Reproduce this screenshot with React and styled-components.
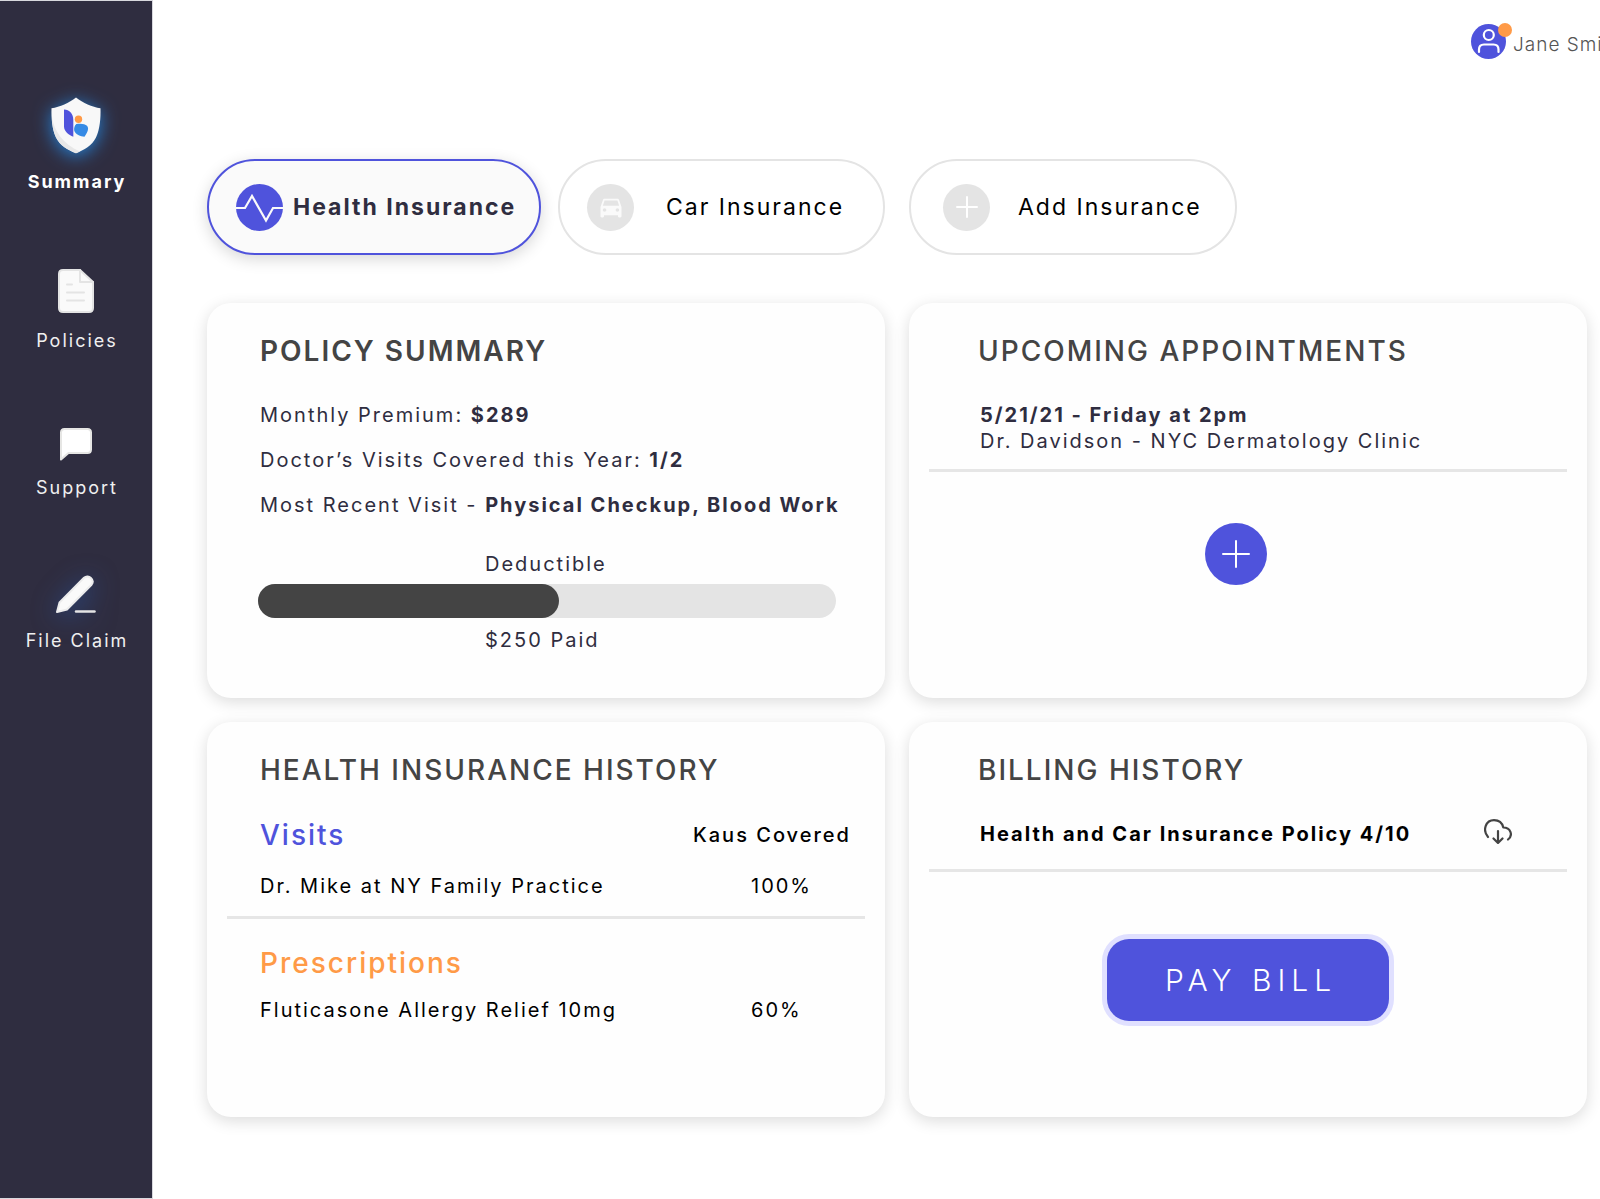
import styled, { createGlobalStyle } from 'styled-components';
import { MdDirectionsCar } from 'react-icons/md';

// global page styles
const GlobalStyle = createGlobalStyle`
    * {
        box-sizing: border-box;
    }
    body {
        margin: 0;
        background-color: #fff;
        color: #2f2d40;
        font-family: Inter, "Liberation Sans", sans-serif;
        font-size: 20px;
        line-height: 26px;
        letter-spacing: 2px;
    }
    h1, h2, p {
        margin: 0;
    }
    button {
        font-family: inherit;
        letter-spacing: inherit;
        cursor: pointer;
    }
`

const Page = styled.div`
    display: flex;
    min-height: 100vh;
`

// sidebar
const Sidebar = styled.nav`
    display: flex;
    flex-direction: column;
    align-items: center;
    gap: 76px;
    flex: 0 0 153px;
    padding-top: 96px;
    background-color: #2f2d40;
    border: 1px solid #d8d8de;
    border-left: none;
`
const SideLink = styled.a`
    display: flex;
    flex-direction: column;
    align-items: center;
    gap: 17px;
    color: ${({ $active }) => ($active ? '#fff' : '#f0f0f0')};
    font-size: 18px;
    font-weight: ${({ $active }) => ($active ? 700 : 400)};
    line-height: 22px;
    text-decoration: none;

    svg {
        display: block;
        overflow: visible;
        filter: ${({ $glow }) => $glow || 'none'};
    }
`
// the trailing letter space would push the label off centre
const SideLabel = styled.span`
    padding-left: 2px;
`

// main area
const Main = styled.main`
    flex: 1;
    min-width: 0;
    padding: 24px 0 80px 54px;
`
const Header = styled.header`
    display: flex;
    justify-content: flex-end;
    overflow: hidden;
    margin-top: -10px;
    padding-top: 10px;
`
const User = styled.a`
    display: flex;
    align-items: center;
    gap: 7px;
    width: 129px;
    color: #555;
    font-size: 19px;
    font-weight: 300;
    letter-spacing: 1px;
    white-space: nowrap;
    text-decoration: none;
`
const Avatar = styled.span`
    position: relative;
    flex: none;
    height: 35px;

    &::after {
        content: '';
        position: absolute;
        top: -1px;
        right: -6px;
        width: 14px;
        height: 14px;
        border-radius: 50%;
        background-color: #ff9a47;
    }
`
const UserName = styled.span`
    padding-top: 6px;
`
const Content = styled.div`
    padding-right: 13px;
`
const Columns = styled.div`
    display: grid;
    grid-template-columns: 1fr 1fr;
    gap: 24px;
`
const Tabs = styled(Columns)`
    margin: 100px 0 48px;
`
const TabPair = styled.div`
    display: flex;
    gap: 17px;
`
const Tab = styled.button`
    display: flex;
    align-items: center;
    gap: ${({ $gap }) => $gap}px;
    flex: ${({ $active }) => ($active ? '0 0 334px' : '0 1 328px')};
    height: 96px;
    padding: 0 0 0 ${({ $inset }) => $inset}px;
    border: 2px solid ${({ $active }) => ($active ? '#4f53dc' : '#e4e4e4')};
    border-radius: 48px;
    background-color: ${({ $active }) => ($active ? '#fafafa' : '#fff')};
    box-shadow: ${({ $active }) => ($active ? '0 4px 16px rgba(0, 0, 0, 0.16)' : 'none')};
    color: ${({ $active }) => ($active ? '#2f2d40' : '#000')};
    font-size: 23px;
    font-weight: ${({ $active }) => ($active ? 700 : 400)};
    white-space: nowrap;
`
const TabIcon = styled.span`
    display: flex;
    align-items: center;
    justify-content: center;
    flex: none;
    width: 47px;
    height: 47px;
    border-radius: 50%;
    background-color: ${({ $active }) => ($active ? '#4f53dc' : '#e4e4e4')};
    color: #fafafa;
`

// cards
const Card = styled.section`
    min-height: 395px;
    padding: 32px 20px;
    border-radius: 24px;
    background-color: #fefefe;
    box-shadow: 0 4px 16px rgba(0, 0, 0, 0.14);
`
const CardTitle = styled.h2`
    padding-left: ${({ $wide }) => ($wide ? 49 : 33)}px;
    color: #444;
    font-size: 28px;
    font-weight: ${({ $strong }) => ($strong ? 600 : 500)};
    line-height: 32px;
`
const Facts = styled.div`
    display: flex;
    flex-direction: column;
    gap: 19px;
    margin-top: 35px;
    padding-left: 33px;
    white-space: nowrap;
`
const Deductible = styled.div`
    margin: 33px 29px 0 31px;
`
const DeductibleLabel = styled.p`
    width: 124px;
    margin: 0 auto;
    white-space: nowrap;
`
const Track = styled.div`
    height: 34px;
    margin: 7px 0 9px;
    border-radius: 17px;
    background-color: #e4e4e4;
`
const Fill = styled.div`
    height: 100%;
    border-radius: 17px;
    background-color: #444;
`
const Entry = styled.div`
    display: flex;
    align-items: center;
    justify-content: space-between;
    margin-top: 35px;
    padding: 0 55px ${({ $bottom }) => $bottom}px 51px;
    border-bottom: 3px solid #e6e6e6;
    color: ${({ $dark }) => ($dark ? '#000' : 'inherit')};
`
const AddButton = styled.button`
    display: flex;
    align-items: center;
    justify-content: center;
    width: 62px;
    height: 62px;
    margin: 51px auto 0;
    padding: 0;
    border: none;
    border-radius: 50%;
    background-color: #4f53dc;
`
const AddArea = styled.div`
    padding-right: 24px;
`
const IconButton = styled.button`
    display: flex;
    height: 26px;
    margin-top: -4px;
    padding: 0;
    border: none;
    background: none;
    color: #444;
`
const PayButton = styled.button`
    display: block;
    width: 282px;
    height: 82px;
    margin: 67px auto 0;
    padding: 0 0 0 6px;
    border: none;
    border-radius: 22px;
    background-color: #4f53dc;
    box-shadow: 0 0 0 5px #e0e0ff;
    color: #fff;
    font-size: 30px;
    font-weight: 300;
    letter-spacing: 6px;
`

// history table
const HistoryTable = styled.table`
    width: 100%;
    margin-top: 32px;
    border-collapse: collapse;
    color: #000;

    th, td {
        padding: 0;
        text-align: left;
        font-weight: 400;
        white-space: nowrap;
    }
    th:first-child, td:first-child {
        padding-left: 33px;
    }
    th:nth-child(2) {
        width: 172px;
        font-weight: 500;
    }
    td {
        height: 60px;
    }
    td:nth-child(2) {
        padding-left: 58px;
    }
    tbody:first-of-type td {
        height: 65px;
        padding-top: 4px;
        border-bottom: 3px solid #e6e6e6;
    }
    tbody:nth-of-type(2) th {
        padding-top: 27px;
    }
`
const GroupName = styled.span`
    color: ${({ $color }) => $color};
    font-size: 28px;
    font-weight: 500;
    line-height: 34px;
`

function ShieldIcon() {
    return (
        <svg width="50" height="57" viewBox="0 0 50 57">
            <path d="M25 0.500C18 6 9 10 0.500 11.300C0.200 21 1 32 5 40.500C9 48.500 17 53 25 56.300C33 53 41 48.500 45 40.500C49 32 49.800 21 49.500 11.300C41 10 32 6 25 0.500Z" fill="#f8f8f8" />
            <path d="M1 20C3 34 12 47 29 54.500L25 56.300C17 53 9 48.500 5 40.500C2 34 1 27 1 20Z" fill="#e8e8e8" />
            <path d="M13 12.500C18.500 12.500 22.300 17 22.300 23V39.800C17.500 38 13 34 13 29.500Z" fill="#4f53dc" />
            <circle cx="27.500" cy="22.200" r="3.700" fill="#ff9a47" />
            <path d="M25.300 27C30 26.300 34 26.800 36 28.800C38 31 37.200 34.500 33.500 39.800C29.500 39.500 24.500 37.500 23.200 33.500C22.800 31 23.600 28.500 25.300 27Z" fill="#358ae5" />
        </svg>
    )
}

function DocumentIcon() {
    return (
        <svg width="36" height="44" viewBox="0 0 36 44" fill="none" stroke="#e4e4e4" strokeWidth="2" strokeLinecap="round" strokeLinejoin="round">
            <path d="M5 1H22L35 13V39Q35 43 31 43H5Q1 43 1 39V5Q1 1 5 1Z" fill="#fafafa" />
            <path d="M22 1V13H35" />
            <path d="M9 15.500H14M9 23.500H26M9 31.500H26" />
        </svg>
    )
}

function ChatIcon() {
    return (
        <svg width="32" height="32" viewBox="0 0 32 32">
            <path d="M4.500 1H27.500Q31 1 31 4.500V21.500Q31 25 27.500 25H8.500L1 31.500V4.500Q1 1 4.500 1Z" fill="#fff" stroke="#e6e6e4" strokeWidth="2" strokeLinejoin="round" />
        </svg>
    )
}

function PenIcon() {
    return (
        <svg width="40" height="38" viewBox="0 0 40 38" strokeLinejoin="round" strokeLinecap="round">
            <path d="M1 37L3.500 27.500L28 2.800C32.500 -1.200 39.500 5 35.300 10L11 34.500Z" fill="#fafafa" stroke="#ececec" strokeWidth="2" />
            <path d="M20 36.500H38.500" stroke="#e4e4e4" strokeWidth="2.500" />
        </svg>
    )
}

function UserIcon() {
    return (
        <svg width="35" height="35" viewBox="0 0 35 35" fill="none" stroke="#fff" strokeWidth="2.200" strokeLinecap="round">
            <circle cx="17.500" cy="17.500" r="17.500" fill="#4f53dc" stroke="none" />
            <circle cx="17.800" cy="11" r="5" />
            <path d="M8 28V25.500Q8 20.500 13 20.500H22.500Q27.500 20.500 27.500 25.500V28" />
        </svg>
    )
}

function PulseIcon() {
    return (
        <svg width="47" height="47" viewBox="0 0 47 47" fill="none" stroke="#fafafa" strokeWidth="2.200">
            <path d="M0 24H9L16 12L30 36.500L37 24H47" />
        </svg>
    )
}

function PlusIcon({ size, width = 2 }) {
    return (
        <svg width={size} height={size} viewBox={`0 0 ${size} ${size}`} stroke="#fff" strokeWidth={width} strokeLinecap="round">
            <path d={`M${size / 2} 1V${size - 1}M1 ${size / 2}H${size - 1}`} />
        </svg>
    )
}

function DownloadIcon() {
    return (
        <svg width="28" height="25" viewBox="0 0 28 25" fill="none" stroke="currentColor" strokeWidth="2.200" strokeLinecap="round" strokeLinejoin="round">
            <path d="M4 18C-2 11 2 1.200 10 1.200C15 1.200 18.300 4.500 19.300 8.500C26.500 8.500 29.500 16 24 20.500" />
            <path d="M14 12V23.500M9.500 19.500L14 24L18.500 19.500" />
        </svg>
    )
}

const links = [
    { name: 'Summary', icon: <ShieldIcon />, active: true, glow: 'drop-shadow(0 3px 9px #2683d8)' },
    { name: 'Policies', icon: <DocumentIcon /> },
    { name: 'Support', icon: <ChatIcon /> },
    { name: 'File Claim', icon: <PenIcon />, glow: 'drop-shadow(0 4px 12px rgba(38, 100, 200, 0.5))' },
]

// percentage of the deductible already paid
const paidShare = 52;

export default function App() {
    return (
        <Page>
            <GlobalStyle />
            <Sidebar>
                {
                    links.map((link) => (
                        <SideLink key={link.name} href="#" $active={link.active} $glow={link.glow}>
                            {link.icon}
                            <SideLabel>{link.name}</SideLabel>
                        </SideLink>
                    ))
                }
            </Sidebar>
            <Main>
                <Header>
                    <User href="#">
                        <Avatar><UserIcon /></Avatar>
                        <UserName>Jane Smith</UserName>
                    </User>
                </Header>
                <Content>
                    <Tabs>
                        <TabPair>
                            <Tab $active $inset={27} $gap={10}>
                                <TabIcon $active><PulseIcon /></TabIcon>
                                Health Insurance
                            </Tab>
                            <Tab $inset={27} $gap={32}>
                                <TabIcon><MdDirectionsCar size={28} /></TabIcon>
                                Car Insurance
                            </Tab>
                        </TabPair>
                        <TabPair>
                            <Tab $inset={32} $gap={28}>
                                <TabIcon><PlusIcon size={22} /></TabIcon>
                                Add Insurance
                            </Tab>
                        </TabPair>
                    </Tabs>
                    <Columns>
                        <Card>
                            <CardTitle $strong>POLICY SUMMARY</CardTitle>
                            <Facts>
                                <p>Monthly Premium: <b>$289</b></p>
                                <p>Doctor’s Visits Covered this Year: <b>1/2</b></p>
                                <p>Most Recent Visit - <b>Physical Checkup, Blood Work</b></p>
                            </Facts>
                            <Deductible>
                                <DeductibleLabel id="deductible">Deductible</DeductibleLabel>
                                <Track role="progressbar" aria-labelledby="deductible" aria-valuenow={paidShare}>
                                    <Fill style={{ width: `${paidShare}%` }} />
                                </Track>
                                <DeductibleLabel>$250 Paid</DeductibleLabel>
                            </Deductible>
                        </Card>
                        <Card>
                            <CardTitle $wide>UPCOMING APPOINTMENTS</CardTitle>
                            <Entry $bottom={15}>
                                <div>
                                    <p><b>5/21/21 - Friday at 2pm</b></p>
                                    <p>Dr. Davidson - NYC Dermatology Clinic</p>
                                </div>
                            </Entry>
                            <AddArea>
                                <AddButton aria-label="Add appointment"><PlusIcon size={28} /></AddButton>
                            </AddArea>
                        </Card>
                        <Card>
                            <CardTitle>HEALTH INSURANCE HISTORY</CardTitle>
                            <HistoryTable>
                                <tbody>
                                    <tr>
                                        <th><GroupName $color="#4f53dc">Visits</GroupName></th>
                                        <th>Kaus Covered</th>
                                    </tr>
                                    <tr>
                                        <td>Dr. Mike at NY Family Practice</td>
                                        <td>100%</td>
                                    </tr>
                                </tbody>
                                <tbody>
                                    <tr>
                                        <th colSpan={2}><GroupName $color="#ff9a47">Prescriptions</GroupName></th>
                                    </tr>
                                    <tr>
                                        <td>Fluticasone Allergy Relief 10mg</td>
                                        <td>60%</td>
                                    </tr>
                                </tbody>
                            </HistoryTable>
                        </Card>
                        <Card>
                            <CardTitle $wide>BILLING HISTORY</CardTitle>
                            <Entry $bottom={22} $dark>
                                <p><b>Health and Car Insurance Policy 4/10</b></p>
                                <IconButton aria-label="Download policy"><DownloadIcon /></IconButton>
                            </Entry>
                            <PayButton>PAY BILL</PayButton>
                        </Card>
                    </Columns>
                </Content>
            </Main>
        </Page>
    )
}
